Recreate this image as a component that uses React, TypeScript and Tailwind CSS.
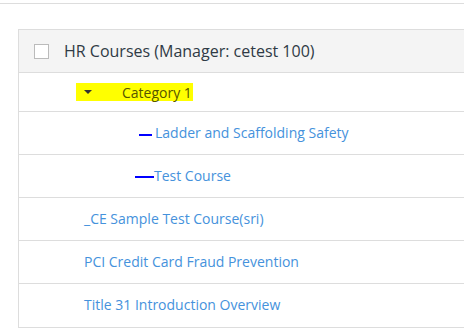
const rows = [
  "_CE Sample Test Course(sri)",
  "PCI Credit Card Fraud Prevention",
  "Title 31 Introduction Overview",
];

export default function App() {
  return (
    <div className="w-[464px] h-[331px] overflow-hidden bg-white font-['Open_Sans',sans-serif]">
      <div className="pt-[3px]">
        <div className="h-px bg-[#dddddd]" />
      </div>
      <div className="ml-[18px] mt-[25px] w-[480px] border border-[#dddddd]">
        <div className="h-[43px] flex items-center bg-[#f4f4f4] border-b border-[#dddddd]">
          <span className="ml-[15px] w-[15px] h-[15px] border-[1.5px] border-[#bbbbbb] bg-white" />
          <span className="ml-[15px] pb-[1px] text-[16px] text-[#2f3a45]">HR Courses (Manager: cetest 100)</span>
        </div>
        <div className="h-[39px] flex items-center border-b border-[#dddddd]">
          <span className="ml-[57px] flex items-center h-[18px] bg-[#ffff00] text-[14px] text-[#555500]">
            <span className="ml-[8px] w-0 h-0 border-l-[4px] border-r-[4px] border-t-[4px] border-l-transparent border-r-transparent border-t-[#333333]" />
            <span className="ml-[30px] mr-[1px]">Category 1</span>
          </span>
        </div>
        <div className="h-[43px] flex items-center border-b border-[#dddddd]">
          <span className="ml-[120px] mt-[3px] w-[13px] h-[2px] bg-[#0000ff]" />
          <span className="ml-[3px] pb-[2px] text-[14px] text-[#4592dc]">Ladder and Scaffolding Safety</span>
        </div>
        <div className="h-[43px] flex items-center border-b border-[#dddddd]">
          <span className="ml-[116px] mt-[1px] w-[19px] h-[2px] bg-[#0000ff]" />
          <span className="pb-[2px] text-[14px] text-[#4592dc]">Test Course</span>
        </div>
        {rows.map((r, i) => (
          <div
            key={r}
            className={`h-[43px] flex items-center ${i < rows.length - 1 ? "border-b border-[#dddddd]" : ""}`}
          >
            <span className="ml-[65px] pb-[2px] text-[14px] text-[#4592dc]">{r}</span>
          </div>
        ))}
      </div>
    </div>
  );
}
